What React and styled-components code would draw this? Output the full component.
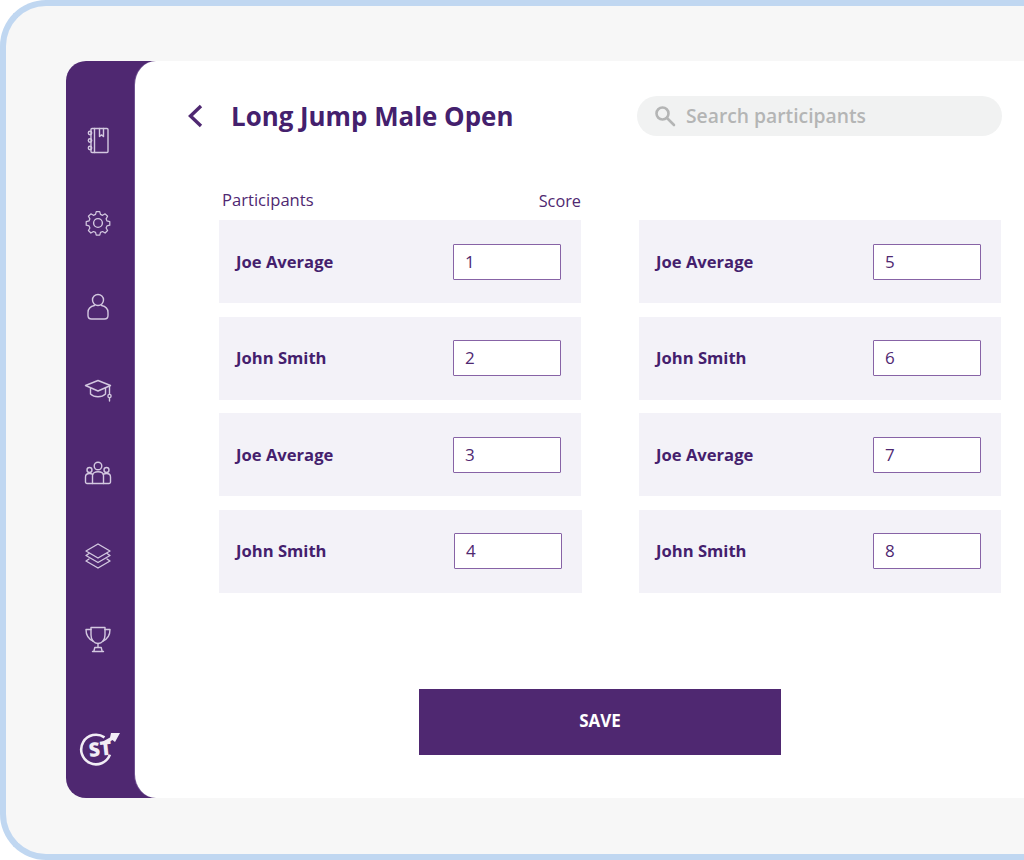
import React from "react";
import styled, { createGlobalStyle } from "styled-components";

const Global = createGlobalStyle`
  html, body { margin: 0; padding: 0; background: #fff; overflow: hidden; }
  * { box-sizing: border-box; }
  body { font-family: "Open Sans", "Noto Sans", sans-serif; }
`;

const Frame = styled.div`
  width: 1024px;
  height: 860px;
  background: #f7f7f7;
  border: 6px solid #c0d7f1;
  border-right: none;
  border-radius: 46px 0 0 46px;
  padding: 55px 0 0 60px;
`;

const Shell = styled.div`
  display: flex;
  height: 737px;
`;

const Sidebar = styled.nav`
  width: 90px;
  margin-right: -21px;
  flex: none;
  background: #4f2871;
  border-radius: 20px 0 0 20px;
  display: flex;
  flex-direction: column;
  align-items: flex-start;
  padding: 63px 0 28px 16px;
  gap: 51.2px;
`;

const NavIcon = styled.svg`
  width: 32px;
  height: 32px;
  flex: none;
  fill: none;
  stroke: #d3c8e0;
  stroke-width: 1.4;
  stroke-linecap: round;
  stroke-linejoin: round;
`;

const Logo = styled.svg`
  width: 44px;
  height: 40px;
  flex: none;
  margin: auto 0 0 -3px;
`;

const Main = styled.main`
  position: relative;
  flex: 1;
  min-width: 0;
  background: #fff;
  border-radius: 21px 0 0 21px / 24px 0 0 24px;
  box-shadow: -1px 0 0 #6f5190;
  padding: 35px 22px 0 0;
`;

const Header = styled.header`
  display: flex;
  align-items: center;
  height: 40px;
  padding-left: 52px;
`;

const BackLink = styled.svg`
  width: 16px;
  height: 24px;
  flex: none;
  fill: none;
  stroke: #4f2871;
  stroke-width: 3.4;
`;

const Title = styled.h1`
  margin: 0 0 0 28px;
  font-size: 25.9px;
  line-height: 40px;
  font-weight: 700;
  color: #44206d;
  white-space: nowrap;
`;

const SearchBar = styled.div`
  margin-left: auto;
  width: 365px;
  height: 40px;
  border-radius: 20px;
  background: #f1f2f2;
  display: flex;
  align-items: center;
  padding-left: 17px;
  gap: 10px;
`;

const SearchText = styled.span`
  font-size: 19.3px;
  font-weight: 600;
  line-height: 25px;
  margin-bottom: 1px;
  color: #b4b5b5;
`;

const Labels = styled.div`
  width: 362px;
  margin: 53px 0 0 84px;
  height: 31px;
  display: flex;
  justify-content: space-between;
  padding-left: 3px;
  font-size: 16.6px;
  line-height: 22px;
  color: #4f2871;
`;

const ScoreLabel = styled.span`
  margin-top: 1px;
  font-size: 16.3px;
`;

const Grid = styled.section`
  margin-left: 84px;
  display: grid;
  grid-auto-flow: column;
  grid-template-rows: repeat(4, 83px);
  grid-template-columns: 362px 362px;
  column-gap: 58px;
  row-gap: 13.5px;
`;

const Row = styled.div`
  background: #f3f2f8;
  display: flex;
  align-items: center;
  justify-content: space-between;
  padding: 0 20px 0 17px;
  margin-right: ${(p) => (p.$wide ? "-1px" : "0")};
`;

const Name = styled.span`
  font-size: 16.6px;
  line-height: 24px;
  font-weight: 700;
  color: #44206d;
`;

const ScoreBox = styled.div`
  width: 108px;
  height: 36px;
  background: #fff;
  border: 1px solid #8763a6;
  border-radius: 1px;
  display: flex;
  align-items: center;
  padding-left: 11px;
  font-size: 17px;
  line-height: 24px;
  color: #4f2871;
`;

const SaveButton = styled.button`
  display: block;
  width: 362px;
  height: 66px;
  margin: 96px 0 0 284px;
  padding: 0 0 3px;
  background: #4f2871;
  border: none;
  color: #fff;
  font-family: inherit;
  font-size: 17px;
  font-weight: 700;
`;

const icons = [
  <>
    <rect x="9" y="4.5" width="17" height="24" rx="1" />
    <path d="M12.5 4.5v24M17.5 4.5v8l2-1.6 2 1.6v-8" />
    <circle cx="8" cy="9" r="1.7" />
    <circle cx="8" cy="16.5" r="1.7" />
    <circle cx="8" cy="24" r="1.7" />
  </>,
  <>
    <circle cx="16" cy="16" r="4.4" />
    <path d="M14 4.5h4l.8 3.2 2.4 1 2.9-1.7 2.8 2.8-1.7 2.9 1 2.4 3.2.8v4l-3.2.8-1 2.4 1.7 2.9-2.8 2.8-2.9-1.7-2.4 1-.8 3.2h-4l-.8-3.2-2.4-1-2.9 1.7-2.8-2.8 1.7-2.9-1-2.4-3.2-.8v-4l3.2-.8 1-2.4-1.7-2.9 2.8-2.8 2.9 1.7 2.4-1z" transform="translate(16 16.500) scale(.88) translate(-16 -18)" />
  </>,
  <>
    <circle cx="16" cy="10" r="5.5" />
    <path d="M12.500 15.500c-4 .8-6.500 3.500-6.500 7v3c0 2 1.500 3.500 3.500 3.500h13c2 0 3.500-1.500 3.500-3.500v-3c0-3.500-2.500-6.200-6.500-7" />
  </>,
  <>
    <path d="M16 6.500 3.500 11.500 16 17l12.500-5.500z" />
    <path d="M8.500 14v6c2 2 4.500 2.800 7.500 2.800s5.500-.8 7.500-2.800v-6" />
    <path d="M27.500 12v8" />
    <circle cx="27.500" cy="22" r="1.600" />
    <path d="M27.500 23.600v3.400" />
  </>,
  <>
    <circle cx="16" cy="9" r="3.800" />
    <circle cx="7.500" cy="13" r="2.500" />
    <circle cx="24.500" cy="13" r="2.500" />
    <path d="M10.500 26.500v-8c0-2.300 2.200-3.800 5.500-3.800s5.500 1.500 5.500 3.800v8" />
    <path d="M10.500 26.500H5a1.500 1.500 0 0 1-1.500-1.500v-5c0-2 1.600-3.500 4-3.500 1.200 0 2.300.3 3.200.9M21.500 26.500H27a1.500 1.500 0 0 0 1.500-1.500v-5c0-2-1.600-3.500-4-3.500-1.200 0-2.300.3-3.200.9M10.500 26.500h11" />
  </>,
  <>
    <path d="M16 4 4 11l12 7 12-7z" />
    <path d="M7 13.500 4 15.500l12 7 12-7-3-2" />
    <path d="M7 19 4 21l12 7 12-7-3-2" />
  </>,
  <>
    <path d="M9 4.500h14v7.500c0 5-3 8.500-7 8.500S9 17 9 12z" />
    <path d="M9 6.500H4c0 5.500 1.500 9 7 11.500M23 6.500h5c0 5.500-1.500 9-7 11.500" />
    <path d="M16 20.500v4M12.800 24.500h6.400l1 4H11.800zM10.500 28.500h11" />
  </>,
];

const rows = [
  ["Joe Average", 1], ["John Smith", 2], ["Joe Average", 3], ["John Smith", 4],
  ["Joe Average", 5], ["John Smith", 6], ["Joe Average", 7], ["John Smith", 8],
];

export default function App() {
  return (
    <>
      <Global />
      <Frame>
        <Shell>
          <Sidebar>
            {icons.map((icon, i) => (
              <NavIcon key={i} viewBox="0 0 32 32">{icon}</NavIcon>
            ))}
            <Logo viewBox="0 0 44 40">
              <path d="M25.500 7.400A14.800 14.800 0 1 0 30.900 24.600" fill="none" stroke="#f1edf5" strokeWidth="2.600" />
              <text x="10.500" y="27" transform="rotate(-6 10.500 27)" fontFamily="Open Sans" fontWeight="800" fontSize="19.500" fill="#f1edf5">ST</text>
              <path d="M23 12 31 7.500 32 3 41 3 36 12 33.500 10 25 15z" fill="#f1edf5" />
            </Logo>
          </Sidebar>
          <Main>
            <Header>
              <BackLink viewBox="0 0 16 24">
                <path d="M14 2 3.500 12 14 22" />
              </BackLink>
              <Title>Long Jump Male Open</Title>
              <SearchBar>
                <svg width="22" height="22" viewBox="0 0 22 22" fill="none" stroke="#b4b5b5" strokeWidth="2.600" strokeLinecap="round">
                  <circle cx="8.500" cy="8.500" r="6" />
                  <path d="M13 13l7 7" />
                </svg>
                <SearchText>Search participants</SearchText>
              </SearchBar>
            </Header>
            <Labels>
              <span>Participants</span>
              <ScoreLabel>Score</ScoreLabel>
            </Labels>
            <Grid>
              {rows.map(([name, score]) => (
                <Row key={score} $wide={score === 4}>
                  <Name>{name}</Name>
                  <ScoreBox>{score}</ScoreBox>
                </Row>
              ))}
            </Grid>
            <SaveButton>SAVE</SaveButton>
          </Main>
        </Shell>
      </Frame>
    </>
  );
}
